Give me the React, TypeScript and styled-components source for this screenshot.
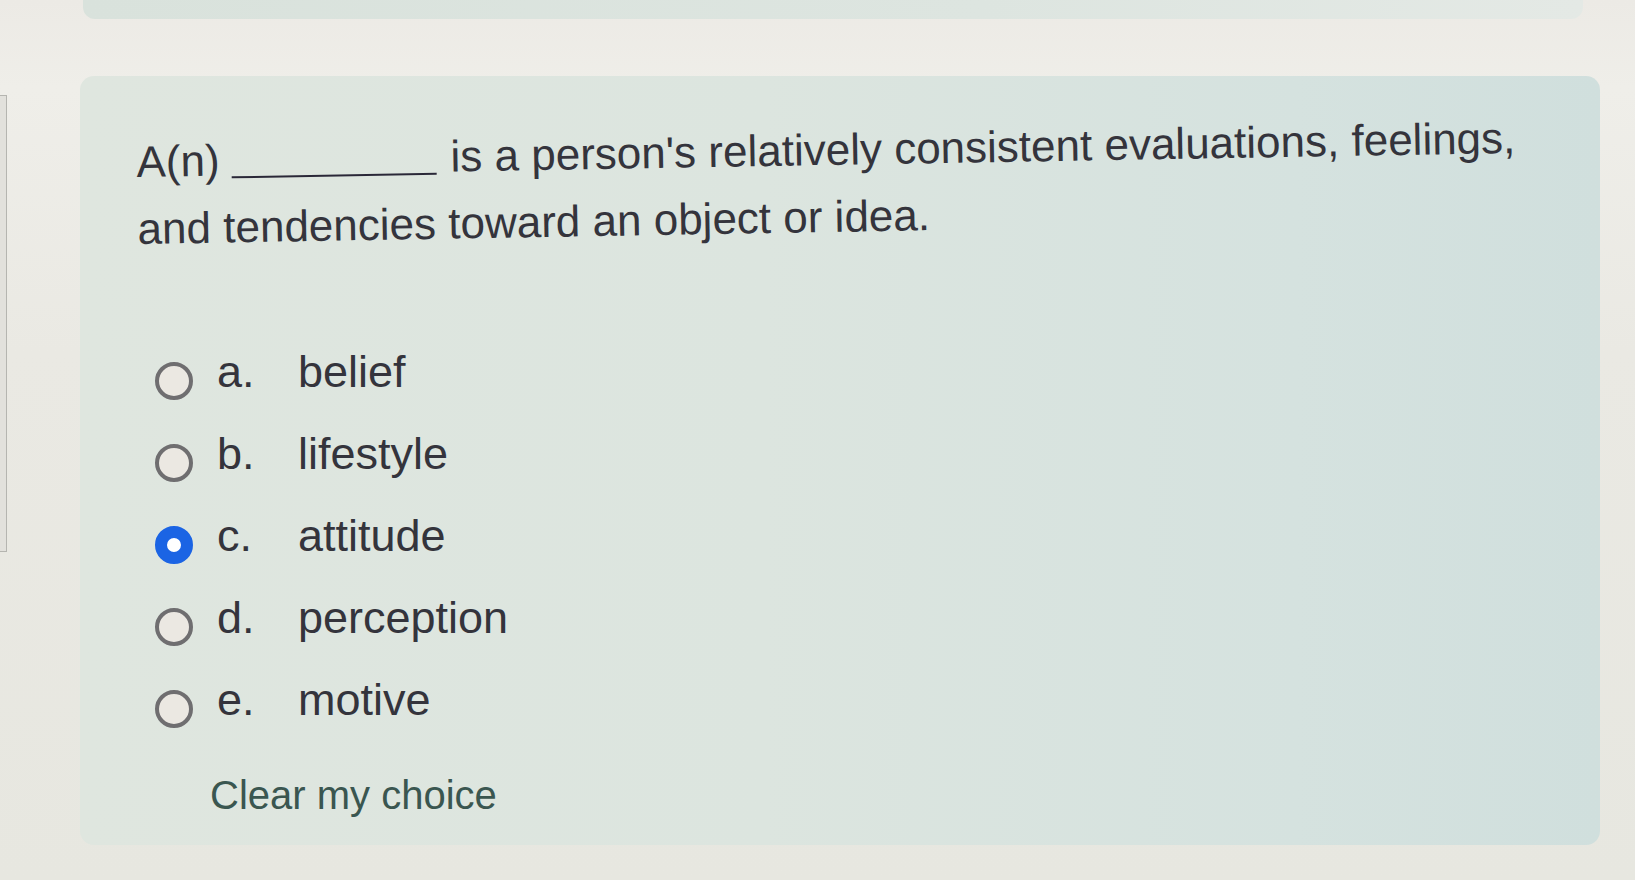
import { useState } from 'react'
import styled, { createGlobalStyle } from 'styled-components'

const GlobalStyle = createGlobalStyle`
  html, body {
    margin: 0;
    padding: 0;
    background: #e9e8e2;
  }
  body {
    font-family: "Liberation Sans", Arial, sans-serif;
  }
`

type Choice = {
  letter: string
  label: string
}

const CHOICES: Choice[] = [
  { letter: 'a.', label: 'belief' },
  { letter: 'b.', label: 'lifestyle' },
  { letter: 'c.', label: 'attitude' },
  { letter: 'd.', label: 'perception' },
  { letter: 'e.', label: 'motive' },
]

const Page = styled.div`
  display: flex;
  width: 1635px;
  height: 880px;
  overflow: hidden;
  background: linear-gradient(
    180deg,
    #eceae5 0%,
    #efeee9 10%,
    #eae9e3 40%,
    #e7e7e0 100%
  );
`

const LeftEdge = styled.div`
  flex: 0 0 6px;
  height: 455px;
  margin-top: 95px;
  background: #e2e1dc;
  border: 1px solid #b5b5b0;
  border-left: none;
`

const Main = styled.main`
  display: flex;
  flex-direction: column;
  padding-left: 73px;
`

const PrevCard = styled.div`
  width: 1500px;
  height: 19px;
  margin-left: 3px;
  background: linear-gradient(90deg, #d9e2dc, #dde5e0 60%, #e4e9e5);
  border-radius: 0 0 12px 12px;
`

const QuestionCard = styled.section`
  width: 1520px;
  height: 769px;
  margin-top: 57px;
  box-sizing: border-box;
  padding: 52px 0 0 57px;
  border-radius: 14px;
  background: linear-gradient(
    90deg,
    #dfe6df 0%,
    #dce5df 45%,
    #d5e2df 80%,
    #d0dfdd 100%
  );
  color: #34343c;
`

const QuestionText = styled.p`
  margin: 0;
  width: 1420px;
  font-size: 44px;
  line-height: 67px;
  transform: rotate(-1deg);
  transform-origin: 0 50%;
`

const Blank = styled.span`
  display: inline-block;
  width: 205px;
  height: 2px;
  margin: 0 14px 0 12px;
  background: #2a2838;
  vertical-align: -3px;
`

const ChoiceList = styled.div`
  display: flex;
  flex-direction: column;
  margin-top: 69px;
  padding-left: 18px;
`

const ChoiceRow = styled.label`
  display: flex;
  align-items: center;
  height: 82px;
  font-size: 45px;
  line-height: 82px;
  cursor: pointer;
`

const Radio = styled.span<{ $checked: boolean }>`
  flex: 0 0 auto;
  box-sizing: border-box;
  width: 38px;
  height: 38px;
  margin-top: 18px;
  border-radius: 50%;
  border: ${({ $checked }) => ($checked ? '12px solid #1b64e4' : '4px solid #6f6e70')};
  background: ${({ $checked }) => ($checked ? '#ffffff' : '#ebe8e2')};
`

const Letter = styled.span`
  display: inline-block;
  min-width: 81px;
  margin-left: 24px;
`

const Label = styled.span`
  display: inline-block;
`

const ClearLink = styled.button`
  align-self: flex-start;
  margin: 30px 0 0 73px;
  padding: 0;
  border: none;
  background: none;
  font-family: "Liberation Sans", Arial, sans-serif;
  font-size: 40px;
  line-height: 48px;
  color: #3a5650;
  cursor: pointer;
`

export default function App() {
  const [selected, setSelected] = useState<string | null>('c.')

  return (
    <>
      <GlobalStyle />
      <Page>
        <LeftEdge />
        <Main>
          <PrevCard />
          <QuestionCard>
            <QuestionText>
              A(n)
              <Blank />
              is a person's relatively consistent evaluations, feelings, and
              tendencies toward an object or idea.
            </QuestionText>
            <ChoiceList>
              {CHOICES.map(choice => (
                <ChoiceRow key={choice.letter} onClick={() => setSelected(choice.letter)}>
                  <Radio $checked={selected === choice.letter} />
                  <Letter>{choice.letter}</Letter>
                  <Label>{choice.label}</Label>
                </ChoiceRow>
              ))}
            </ChoiceList>
            <ClearLink type="button" onClick={() => setSelected(null)}>
              Clear my choice
            </ClearLink>
          </QuestionCard>
        </Main>
      </Page>
    </>
  )
}
